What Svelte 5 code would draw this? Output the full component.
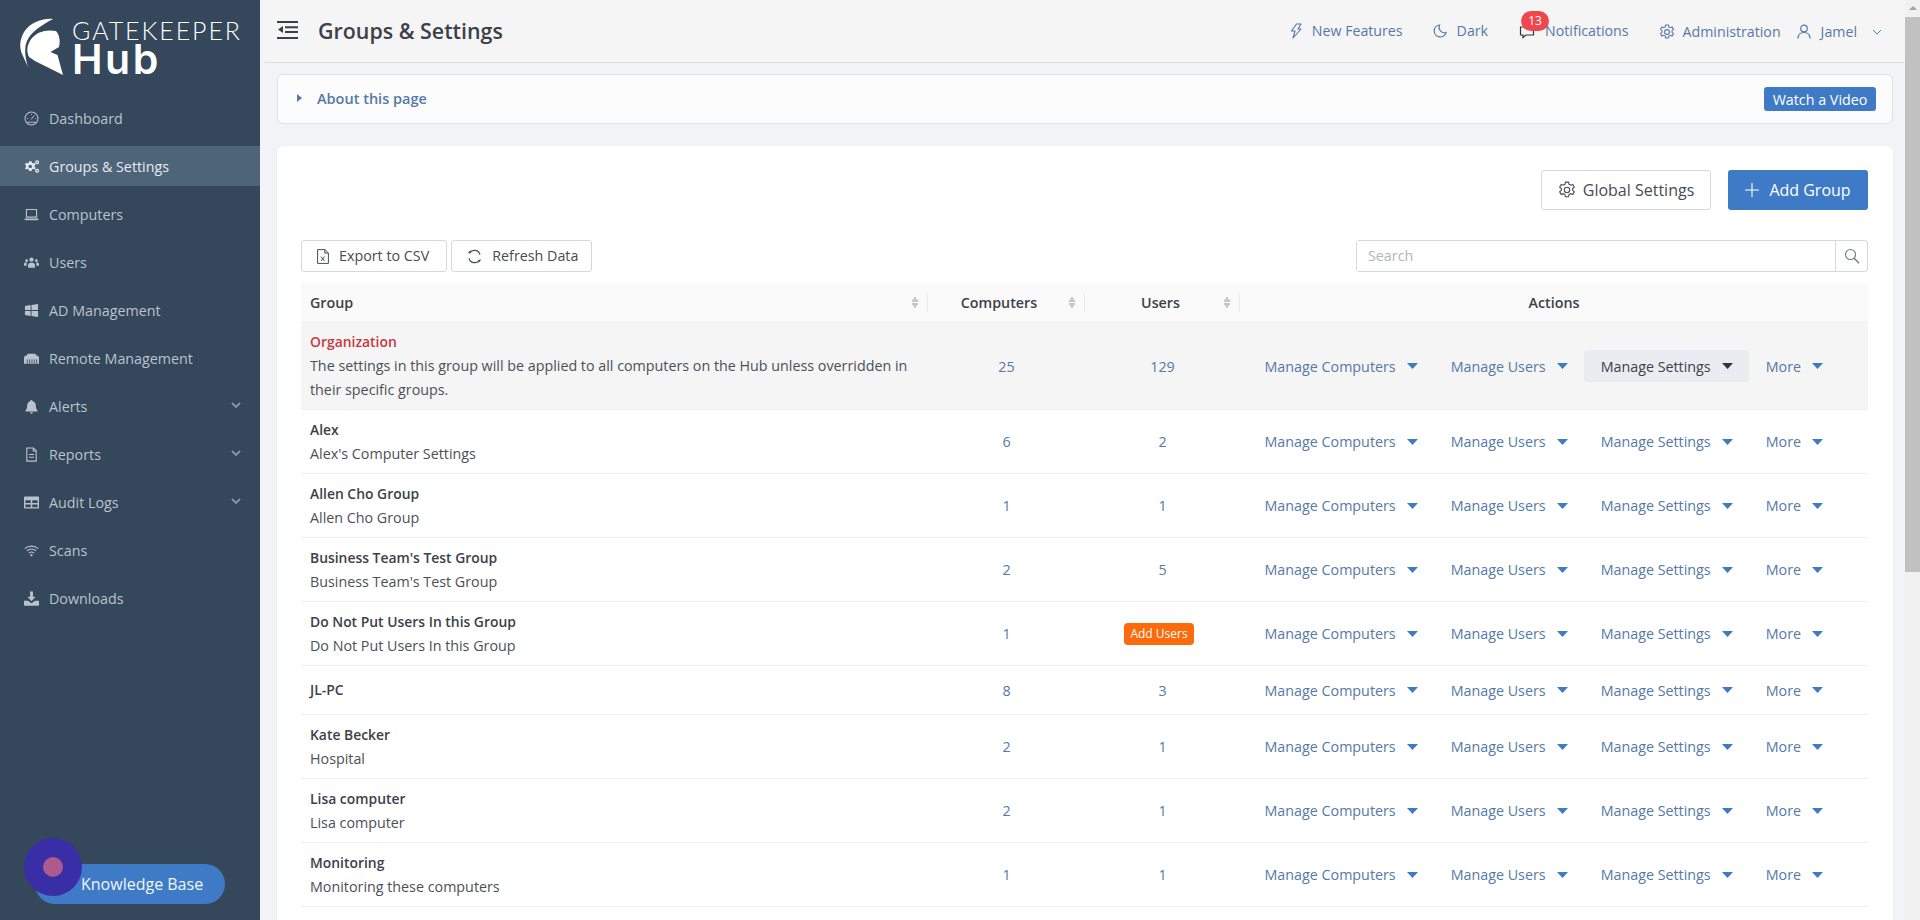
<script lang="ts">
	const navItems = [
		{ label: 'Dashboard', icon: '<circle cx="8" cy="8" r="6.9" fill="none" stroke="currentColor" stroke-width="1.1"/><path d="M7.6 9 11 4.600M3.400 8h1M11.800 8h.9M8 3.200v1M3 12h10" fill="none" stroke="currentColor" stroke-width="1"/>' },
		{ label: 'Groups & Settings', active: true, icon: '<path fill="currentColor" d="M5.400 2.500h2.700l.3 1.600 1.400.7 1.500-.8 1.200 1.800-1.200 1.100.1 1.500 1.100 1.100-1.200 1.800-1.500-.8-1.400.7-.3 1.700H5.400l-.3-1.700-1.400-.7-1.500.8L1 9.500l1.200-1.100-.1-1.500L1 5.800 2.200 4l1.500.8 1.400-.7z"/><circle cx="6.700" cy="8" r="1.900" fill="#4e6579"/><circle cx="14" cy="3.500" r="1.500" fill="none" stroke="currentColor" stroke-width="1.400"/><circle cx="14" cy="12.500" r="1.500" fill="none" stroke="currentColor" stroke-width="1.400"/>' },
		{ label: 'Computers', icon: '<path fill="none" stroke="currentColor" stroke-width="1.2" d="M2.600 2.600h10.800v8.200H2.600z"/><path fill="currentColor" d="M.5 12.200h15v1.200l-1 .8h-13l-1-.8z"/>' },
		{ label: 'Users', icon: '<g fill="currentColor"><circle cx="8" cy="5" r="2.300"/><path d="M4.300 13.500v-2.600c0-1.600 1.200-2.700 2.500-2.700h2.400c1.300 0 2.500 1.100 2.500 2.700v2.600z"/><circle cx="2.800" cy="6" r="1.500"/><circle cx="13.200" cy="6" r="1.500"/><path d="M0 11.500V9.700c0-1 .8-1.700 1.700-1.700h1.500C2.900 8.600 2.800 9.600 2.800 11.500zM16 11.500V9.700c0-1-.8-1.700-1.700-1.700h-1.500c.3.600.4 1.600.4 3.500z"/></g>' },
		{ label: 'AD Management', icon: '<path fill="currentColor" d="M1 3.200 7 2.200v5.200H1zM8 2 15 1v6.400H8zM1 8.400h6v5.400l-6-1zM8 8.400h7V15l-7-1.100z"/>' },
		{ label: 'Remote Management', icon: '<path fill="currentColor" d="M4 3h8l1.500 2H15l1 2v6.500H0V7l1-2h1.500z"/><path stroke="#34475b" stroke-width=".9" d="M3.500 9v4.500M6 9v4.500M8.500 9v4.500M11 9v4.500M13.500 9v4.500"/>' },
		{ label: 'Alerts', chevron: true, icon: '<path fill="currentColor" d="M8 1c.7 0 1.100.5 1.100 1.200C11.400 2.800 12.600 4.800 12.600 7c0 3 .9 4.200 1.900 5.400v.9h-13v-.9C2.500 11.200 3.400 10 3.400 7c0-2.200 1.200-4.200 3.500-4.800C6.900 1.500 7.300 1 8 1zM6.400 14.200h3.200c0 .9-.7 1.500-1.600 1.500s-1.600-.6-1.600-1.500z"/>' },
		{ label: 'Reports', chevron: true, icon: '<path fill="none" stroke="currentColor" stroke-width="1.200" d="M3 1h7l3 3v11H3z"/><path fill="none" stroke="currentColor" stroke-width="1.100" d="M9.800 1v3.300H13M5.300 8h5.400M5.300 11h5.400"/>' },
		{ label: 'Audit Logs', chevron: true, icon: '<path fill="currentColor" fill-rule="evenodd" d="M1 1.500h14a1 1 0 0 1 1 1v11a1 1 0 0 1-1 1H1a1 1 0 0 1-1-1v-11a1 1 0 0 1 1-1zM1.500 5.500v3h5.700v-3zm7.300 0v3h5.700v-3zM1.500 10v3h5.700v-3zm7.300 0v3h5.700v-3z"/>' },
		{ label: 'Scans', icon: '<path fill="none" stroke="currentColor" stroke-width="1.200" d="M.8 6C4.800 2.400 11.200 2.400 15.200 6M3 8.400c2.900-2.500 7.100-2.500 10 0M5.300 10.600c1.600-1.200 3.800-1.200 5.400 0"/><circle cx="8" cy="13" r="1.200" fill="currentColor"/>' },
		{ label: 'Downloads', icon: '<path fill="currentColor" d="M6.500.5h3V6h2.800L8 10.800 3.700 6h2.800zM0 10.500h4.200L8 13l3.800-2.500H16V15a.8.8 0 0 1-.8.8H.8A.8.8 0 0 1 0 15z"/>' }
	];

	const groups = [
		{ name: 'Organization', desc: 'The settings in this group will be applied to all computers on the Hub unless overridden in their specific groups.', computers: 25, users: 129, org: true },
		{ name: 'Alex', desc: "Alex's Computer Settings", computers: 6, users: 2 },
		{ name: 'Allen Cho Group', desc: 'Allen Cho Group', computers: 1, users: 1 },
		{ name: "Business Team's Test Group", desc: "Business Team's Test Group", computers: 2, users: 5 },
		{ name: 'Do Not Put Users In this Group', desc: 'Do Not Put Users In this Group', computers: 1, users: 0 },
		{ name: 'JL-PC', desc: '', computers: 8, users: 3 },
		{ name: 'Kate Becker', desc: 'Hospital', computers: 2, users: 1 },
		{ name: 'Lisa computer', desc: 'Lisa computer', computers: 2, users: 1 },
		{ name: 'Monitoring', desc: 'Monitoring these computers', computers: 1, users: 1 }
	];

	const actions = ['Manage Computers', 'Manage Users', 'Manage Settings', 'More'];
</script>

<div class="shell">
	<aside class="sidebar">
		<div class="logo">
			<svg class="helmet" viewBox="8 8 46 57" width="46" height="57">
				<path fill="#fff" d="M43 9C32 8 20 13 14 22 10 29 9 37 12 44L18 57C15 47 14 38 17 31 21 22 30 16 43 9Z" />
				<path fill="#fff" d="M46 21C36 19 27 22 22 28 17 34 16 41 19 47L25 51 53 65 47.500 45 40.500 42 49 37C50.500 31 49.500 25 46 21Z" />
			</svg>
			<div class="logo-text">
				<span class="brand">GATEKEEPER</span>
				<span class="hub">Hub</span>
			</div>
		</div>
		<nav>
			{#each navItems as item}
				<a class="nav-item" class:active={item.active} href="#top">
					<svg class="nav-icon" viewBox="0 0 16 16">{@html item.icon}</svg>
					<span>{item.label}</span>
					{#if item.chevron}
						<svg class="nav-chevron" viewBox="0 0 10 6"><path d="M1 1l4 4 4-4" fill="none" stroke="currentColor" stroke-width="1.800" /></svg>
					{/if}
				</a>
			{/each}
		</nav>
		<a class="kb" href="#top">Knowledge Base</a>
		<div class="chat-bubble"><span></span></div>
	</aside>

	<main class="main">
		<header class="topbar">
			<svg class="menu-icon" viewBox="0 0 21 18">
				<path d="M0 1h21M8 6.200h13M8 11h13M0 17h21" stroke="#3b3f47" stroke-width="2" fill="none" />
				<path d="M6 5v7L1 8.500z" fill="#3b3f47" />
			</svg>
			<h1>Groups &amp; Settings</h1>
			<div class="top-links">
				<a class="top-link features" href="#top">
					<svg viewBox="0 0 12 16" width="12" height="16"><path d="M6.500 1H11L8 6h3L3 15l2-7H1.500z" fill="none" stroke="currentColor" stroke-width="1.100" stroke-linejoin="round" /></svg>
					New Features
				</a>
				<a class="top-link dark" href="#top">
					<svg viewBox="0 0 14 14" width="14" height="14"><path d="M6.500 1A6 6 0 1 0 13 8.500 5.500 5.500 0 0 1 6.500 1z" fill="none" stroke="currentColor" stroke-width="1.200" /></svg>
					Dark
				</a>
				<a class="top-link notifications" href="#top">
					<svg viewBox="0 0 16 16" width="16" height="16"><path d="M1.500 4h13v8H7l-3 2.500V12H1.500z" fill="none" stroke="#333" stroke-width="1.200" /></svg>
					<span class="badge">13</span>
					Notifications
				</a>
				<a class="top-link admin" href="#top">
					<svg viewBox="0 0 16 16" width="16" height="16"><path d="M6.600 1h2.800l.4 1.900 1.500.8 1.800-.7 1.400 2.400-1.500 1.300v1.600l1.500 1.300-1.400 2.400-1.800-.7-1.500.8-.4 1.900H6.600l-.4-1.900-1.500-.8-1.800.7-1.400-2.400 1.500-1.300V6.700L1.500 5.400l1.400-2.400 1.800.7 1.500-.8z" fill="none" stroke="currentColor" stroke-width="1.100" /><circle cx="8" cy="8" r="2.400" fill="none" stroke="currentColor" stroke-width="1.100" /></svg>
					Administration
				</a>
				<a class="top-link user" href="#top">
					<svg viewBox="0 0 14 15" width="14" height="15"><circle cx="7" cy="4.500" r="3.300" fill="none" stroke="currentColor" stroke-width="1.200" /><path d="M1 14.500c0-4 2.500-6 6-6s6 2 6 6" fill="none" stroke="currentColor" stroke-width="1.200" /></svg>
					Jamel
					<svg class="user-chevron" viewBox="0 0 10 6" width="10" height="6"><path d="M1 1l4 4 4-4" fill="none" stroke="currentColor" stroke-width="1" /></svg>
				</a>
			</div>
		</header>

		<div class="content">
			<section class="about">
				<span class="about-title"><i class="about-arrow"></i>About this page</span>
				<button class="video-btn">Watch a Video</button>
			</section>

			<section class="card">
				<div class="card-actions">
					<button class="btn-outline">
						<svg viewBox="0 0 16 16" width="18" height="18"><path d="M6.600 1h2.800l.4 1.900 1.500.8 1.800-.7 1.400 2.400-1.500 1.300v1.600l1.500 1.300-1.400 2.400-1.800-.7-1.500.8-.4 1.900H6.600l-.4-1.900-1.500-.8-1.800.7-1.400-2.400 1.500-1.300V6.700L1.500 5.400l1.400-2.400 1.800.7 1.500-.8z" fill="none" stroke="currentColor" stroke-width="1" /><circle cx="8" cy="8" r="2.400" fill="none" stroke="currentColor" stroke-width="1" /></svg>
						Global Settings
					</button>
					<button class="btn-primary">
						<svg viewBox="0 0 14 14" width="14" height="14"><path d="M7 0v14M0 7h14" stroke="currentColor" stroke-width="1.100" /></svg>
						Add Group
					</button>
				</div>

				<div class="table-tools">
					<button class="btn-small">
						<svg viewBox="0 0 12 15" width="12" height="15"><path d="M.6.6h7.300L11.400 4v10.400H.6z" fill="none" stroke="currentColor" stroke-width="1" /><path d="M7.800.6v3.500h3.500" fill="none" stroke="currentColor" stroke-width="1" /><path d="M4 7.500l3.500 4.500M7.500 7.500 4 12" stroke="currentColor" stroke-width="1" /></svg>
						<span>Export to CSV</span>
					</button>
					<button class="btn-small refresh">
						<svg viewBox="0 0 16 16" width="15" height="15"><path d="M13.800 6A6 6 0 0 0 3 4M2.200 10a6 6 0 0 0 10.800 2" fill="none" stroke="currentColor" stroke-width="1.300" /><path d="M3.800 1v3.500H.8zM12.200 15v-3.500h3z" fill="currentColor" /></svg>
						<span>Refresh Data</span>
					</button>
					<div class="search">
						<input placeholder="Search" />
						<span class="search-btn">
							<svg viewBox="0 0 16 16" width="16" height="16"><circle cx="6.500" cy="6.500" r="5" fill="none" stroke="#6f7780" stroke-width="1.100" /><path d="M10 10l5 5.300" stroke="#6f7780" stroke-width="1.300" /></svg>
						</span>
					</div>
				</div>

				<table>
					<colgroup>
						<col class="col-group" />
						<col class="col-num" />
						<col class="col-num2" />
						<col />
					</colgroup>
					<thead>
						<tr>
							<th class="sortable left">Group<i class="sort"></i></th>
							<th class="sortable computers">Computers<i class="sort"></i></th>
							<th class="sortable users">Users<i class="sort"></i></th>
							<th>Actions</th>
						</tr>
					</thead>
					<tbody>
						{#each groups as group, i}
							<tr class:org={group.org} class:short={!group.desc}>
								<td class="group-cell">
									<div class="group-name">{group.name}</div>
									{#if group.desc}<div class="group-desc">{group.desc}</div>{/if}
								</td>
								<td class="count">{group.computers}</td>
								<td class="count">
									{#if group.users}{group.users}{:else}<span class="add-users">Add Users</span>{/if}
								</td>
								<td>
									<div class="actions">
										{#each actions as action}
											<button class="action" class:hovered={i === 0 && action === 'Manage Settings'}>
												{action}
												<svg viewBox="0 0 11 6" width="11" height="6"><path d="M0 0h11L5.500 6z" fill="currentColor" /></svg>
											</button>
										{/each}
									</div>
								</td>
							</tr>
						{/each}
					</tbody>
				</table>
			</section>
		</div>
	</main>

	<div class="scrollbar">
		<span class="scroll-up"></span>
		<span class="scroll-thumb"></span>
	</div>
</div>

<style>
	:global(body) {
		margin: 0;
		overflow: hidden;
		font-family: 'Open Sans', 'Liberation Sans', sans-serif;
		font-size: 14.3px;
		color: #3c4149;
	}

	.shell {
		display: flex;
		height: 920px;
		overflow: hidden;
		background: #f1f3f6;
	}

	.sidebar {
		position: relative;
		width: 260px;
		flex: none;
		background: #34475b;
		color: #b9c3cd;
	}

	.logo {
		display: flex;
		gap: 8px;
		height: 98px;
		padding: 18px 0 0 18px;
		box-sizing: border-box;
	}

	.helmet {
		flex: none;
	}

	.logo-text {
		display: flex;
		flex-direction: column;
		color: #fff;
	}

	.brand {
		font-family: Lato, sans-serif;
		font-weight: 300;
		font-size: 25px;
		line-height: 24px;
		letter-spacing: 1.9px;
		white-space: nowrap;
	}

	.hub {
		font-family: Inter, sans-serif;
		font-weight: 600;
		font-size: 41px;
		line-height: 34px;
		letter-spacing: 2.5px;
	}

	nav {
		display: flex;
		flex-direction: column;
	}

	.nav-item {
		display: flex;
		align-items: center;
		gap: 10px;
		height: 40px;
		margin-bottom: 8.1px;
		padding: 0 19px 0 24px;
		color: inherit;
		text-decoration: none;
	}

	.nav-item.active {
		background: #4e6579;
		color: #e6eaee;
	}

	.nav-icon {
		width: 15px;
		height: 15px;
		flex: none;
	}

	.nav-chevron {
		width: 10px;
		height: 6px;
		margin-left: auto;
		margin-top: -4px;
		color: #8c99a6;
	}

	.kb {
		position: absolute;
		left: 35px;
		top: 864px;
		display: flex;
		align-items: center;
		width: 190px;
		height: 40px;
		box-sizing: border-box;
		padding-left: 46px;
		border-radius: 20px;
		background: #3f7ac6;
		color: #f1f6fc;
		font-size: 16px;
		text-decoration: none;
	}

	.chat-bubble {
		position: absolute;
		left: 24px;
		top: 838px;
		display: flex;
		align-items: center;
		justify-content: center;
		width: 58px;
		height: 58px;
		border-radius: 50%;
		background: #3a2ea6;
	}

	.chat-bubble span {
		width: 20px;
		height: 20px;
		border-radius: 50%;
		background: #ad5a8e;
	}

	.main {
		flex: 1;
		min-width: 0;
	}

	.topbar {
		display: flex;
		align-items: center;
		height: 63px;
		margin-left: 5px;
		padding: 0 23px 0 12px;
		box-sizing: border-box;
		background: #f5f5f5;
		border-bottom: 1px solid #dcdfe2;
	}

	.menu-icon {
		width: 21px;
		height: 18px;
		margin-top: -2px;
		flex: none;
	}

	h1 {
		margin: -2px 0 0 20px;
		font-size: 21.4px;
		font-weight: 600;
		color: #3c4149;
	}

	.top-links {
		display: flex;
		align-items: center;
		margin-left: auto;
		margin-top: -1px;
		font-size: 14.2px;
	}

	.top-link {
		position: relative;
		display: flex;
		align-items: center;
		gap: 10px;
		color: #5579a8;
		text-decoration: none;
		white-space: nowrap;
	}

	.dark {
		margin-left: 30px;
	}

	.notifications {
		margin-left: 31px;
	}

	.admin {
		margin-left: 30px;
		margin-top: 2px;
		gap: 8px;
	}

	.user {
		margin-left: 16px;
		margin-top: 2px;
	}

	.user-chevron {
		margin-left: 5px;
	}

	.badge {
		position: absolute;
		left: 2px;
		top: -10px;
		width: 28px;
		height: 20px;
		border-radius: 10px;
		background: #f0474f;
		color: #fff;
		font-size: 12px;
		line-height: 20px;
		text-align: center;
	}

	.content {
		padding: 11px 12px 0 17px;
	}

	.about {
		display: flex;
		align-items: center;
		justify-content: space-between;
		height: 50px;
		padding: 0 16px 0 19px;
		box-sizing: border-box;
		background: #fcfcfc;
		border: 1px solid #dfe2e5;
		border-radius: 6px;
	}

	.about-title {
		display: flex;
		align-items: center;
		margin-top: -2px;
		color: #5579a8;
		font-size: 14.5px;
		font-weight: 600;
	}

	.about-arrow {
		width: 0;
		height: 0;
		margin-right: 15px;
		border-left: 5px solid #5579a8;
		border-top: 4.5px solid transparent;
		border-bottom: 4.5px solid transparent;
	}

	.video-btn {
		height: 24px;
		width: 112px;
		padding: 0;
		border: none;
		border-radius: 3px;
		background: #3f7ac6;
		color: #fff;
		font: inherit;
	}

	.card {
		min-height: 800px;
		margin-top: 22px;
		padding: 24px 25px 0 24px;
		background: #fff;
		border-radius: 6px 6px 0 0;
		box-shadow: 0 0 1px #d5d8dc;
	}

	.card-actions {
		display: flex;
		justify-content: flex-end;
		gap: 17px;
	}

	.btn-outline,
	.btn-primary {
		display: flex;
		align-items: center;
		justify-content: center;
		gap: 7px;
		height: 40px;
		border-radius: 3px;
		font: inherit;
		font-size: 16px;
	}

	.btn-outline {
		width: 170px;
		background: #fff;
		border: 1px solid #d5d8dc;
		color: #474c53;
	}

	.btn-primary {
		width: 140px;
		gap: 10px;
		background: #3f7ac6;
		border: none;
		color: #fff;
	}

	.table-tools {
		display: flex;
		gap: 4px;
		margin-top: 30px;
	}

	.btn-small {
		display: flex;
		align-items: center;
		gap: 10px;
		height: 32px;
		padding: 0 17px 0 15px;
		background: #fff;
		border: 1px solid #d5d8dc;
		border-radius: 3px;
		color: #474c53;
		font: inherit;
	}

	.btn-small.refresh {
		padding-right: 13px;
	}

	.btn-small span {
		margin-top: -2px;
	}

	.search {
		display: flex;
		width: 512px;
		height: 32px;
		margin-left: auto;
		box-sizing: border-box;
		border: 1px solid #d5d8dc;
		border-radius: 3px;
	}

	.search input {
		flex: 1;
		min-width: 0;
		padding: 0 11px 2px;
		border: none;
		font: inherit;
		outline: none;
	}

	.search input::placeholder {
		color: #b2b6ba;
	}

	.search-btn {
		display: flex;
		align-items: center;
		justify-content: center;
		width: 31px;
		border-left: 1px solid #d5d8dc;
	}

	table {
		width: 100%;
		margin-top: 11px;
		table-layout: fixed;
		border-collapse: collapse;
	}

	.col-group {
		width: 627px;
	}

	.col-num {
		width: 157px;
	}

	.col-num2 {
		width: 155px;
	}

	th {
		position: relative;
		height: 39px;
		padding: 0;
		background: #fafafa;
		font-weight: 600;
		color: #3c4149;
		border-bottom: 1px solid #f0f0f0;
	}

	th.left {
		padding-left: 9px;
		text-align: left;
	}

	th.computers {
		padding-right: 15px;
	}

	th.users {
		padding-right: 4px;
	}

	th.sortable::after {
		content: '';
		position: absolute;
		right: 0;
		top: 10px;
		bottom: 10px;
		width: 1px;
		background: #ececec;
	}

	.sort {
		position: absolute;
		right: 9px;
		top: 13px;
		width: 8px;
		height: 13px;
		background:
			conic-gradient(from 150deg at 50% 0, #c4c7cb 60deg, transparent 0) top / 8px 6px no-repeat,
			conic-gradient(from -30deg at 50% 100%, #c4c7cb 60deg, transparent 0) bottom / 8px 6px no-repeat;
	}

	td {
		height: 64px;
		padding: 0;
		border-bottom: 1px solid #efefef;
		box-sizing: border-box;
	}

	tr.short td {
		height: 49px;
	}

	tr.org td {
		height: 87px;
		background: #f5f5f5;
	}

	.group-cell {
		padding: 0 17px 0 9px;
		line-height: 24px;
	}

	.group-name {
		font-size: 13.9px;
		font-weight: 600;
		color: #3c4149;
	}

	.org .group-name {
		color: #c33a3f;
	}

	.group-desc {
		color: #4b5057;
	}

	.count {
		text-align: center;
		color: #5579a8;
	}

	.add-users {
		display: inline-block;
		width: 70px;
		height: 22px;
		margin-right: 7px;
		border-radius: 4px;
		background: #fb6a0c;
		color: #fff;
		font-size: 12px;
		line-height: 22px;
	}

	.actions {
		display: flex;
		padding-left: 8px;
	}

	.action {
		display: flex;
		align-items: center;
		gap: 11px;
		height: 32px;
		padding: 0 16.5px;
		background: none;
		border: none;
		border-radius: 4px;
		color: #5579a8;
		font: inherit;
		white-space: nowrap;
	}

	.action svg {
		color: #3f7ac6;
	}

	.action.hovered {
		background: #e9edf1;
		color: #3c4149;
	}

	.action.hovered svg {
		color: #33373d;
	}

	.scrollbar {
		display: flex;
		flex-direction: column;
		align-items: center;
		width: 15px;
		flex: none;
		background: #f1f1f1;
	}

	.scroll-up {
		width: 0;
		height: 0;
		margin: 6px 0 4px;
		border-left: 4px solid transparent;
		border-right: 4px solid transparent;
		border-bottom: 4px solid #a3a3a3;
	}

	.scroll-thumb {
		width: 100%;
		height: 555px;
		margin-top: 3px;
		background: #c1c1c1;
	}
</style>
